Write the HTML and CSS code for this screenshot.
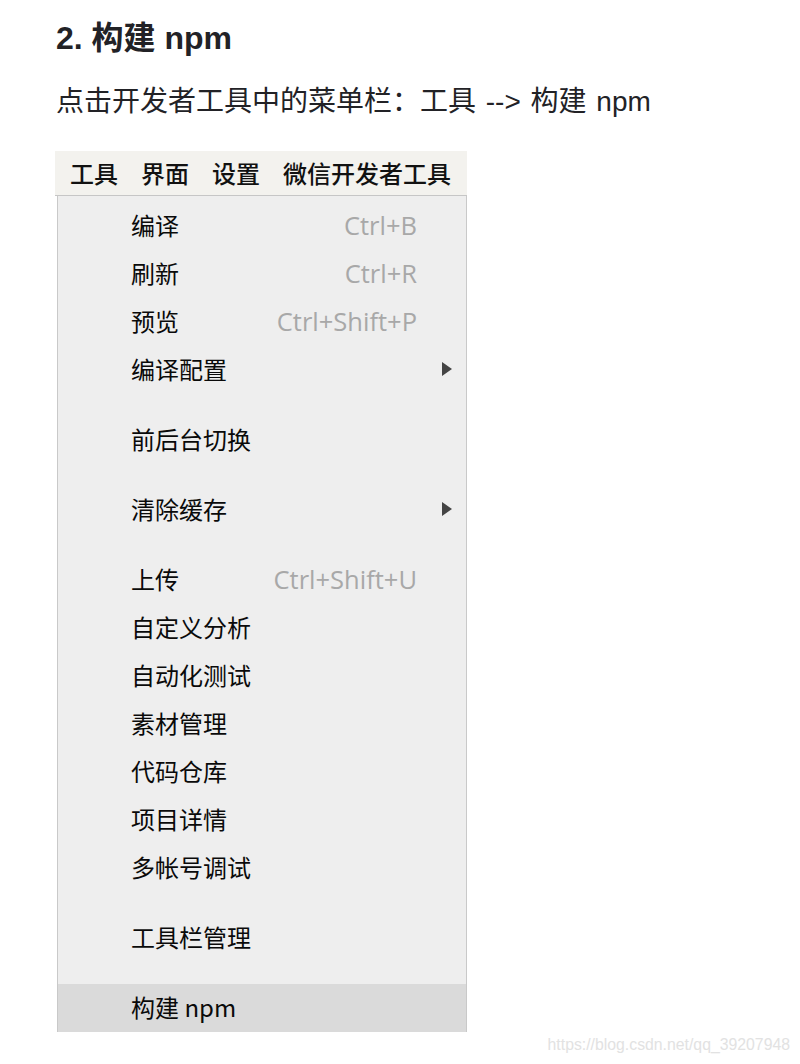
FILE: index.html
```html
<!DOCTYPE html>
<html lang="zh-CN">
<head>
<meta charset="utf-8">
<title>构建 npm</title>
<link rel="stylesheet" href="styles.css">
</head>
<body>
<h2 class="title">2. 构建 npm</h2>
<p class="lead">点击开发者工具中的菜单栏：工具 --&gt; 构建 npm</p>
<div class="shot">
  <div class="menubar">
    <span class="mb-item">工具</span>
    <span class="mb-item">界面</span>
    <span class="mb-item">设置</span>
    <span class="mb-item">微信开发者工具</span>
  </div>
  <div class="menu">
    <div class="row"><span class="label">编译</span><span class="key">Ctrl+B</span></div>
    <div class="row"><span class="label">刷新</span><span class="key">Ctrl+R</span></div>
    <div class="row"><span class="label">预览</span><span class="key">Ctrl+Shift+P</span></div>
    <div class="row"><span class="label">编译配置</span><span class="arrow"></span></div>
    <div class="sep"></div>
    <div class="row"><span class="label">前后台切换</span></div>
    <div class="sep"></div>
    <div class="row"><span class="label">清除缓存</span><span class="arrow"></span></div>
    <div class="sep"></div>
    <div class="row"><span class="label">上传</span><span class="key">Ctrl+Shift+U</span></div>
    <div class="row"><span class="label">自定义分析</span></div>
    <div class="row"><span class="label">自动化测试</span></div>
    <div class="row"><span class="label">素材管理</span></div>
    <div class="row"><span class="label">代码仓库</span></div>
    <div class="row"><span class="label">项目详情</span></div>
    <div class="row"><span class="label">多帐号调试</span></div>
    <div class="sep"></div>
    <div class="row"><span class="label">工具栏管理</span></div>
    <div class="sep"></div>
    <div class="row active"><span class="label">构建 npm</span></div>
  </div>
</div>
<div class="watermark">https://blog.csdn.net/qq_39207948</div>
</body>
</html>
```

FILE: styles.css
```css
html, body {
  margin: 0;
  background: #ffffff;
}
body {
  padding: 0 0 0 56px;
  font-family: "Liberation Sans", "Noto Sans CJK SC", sans-serif;
  color: #222226;
  height: 1064px;
  box-sizing: border-box;
  position: relative;
}
.title {
  margin: 0;
  padding-top: 18px;
  font-size: 32px;
  line-height: 40px;
  font-weight: 700;
  color: #222226;
}
.lead {
  margin: 24px 0 0;
  font-size: 28px;
  line-height: 40px;
  font-weight: 400;
  color: #222226;
  word-spacing: 2px;
}
.shot {
  margin: 29px 0 0 -1px;
  width: 414px;
  font-family: "Noto Sans CJK SC", sans-serif;
}
.menubar {
  height: 44px;
  background: #f3f2ee;
  display: flex;
  align-items: center;
  gap: 23px;
  padding-left: 15px;
  font-size: 24px;
  font-weight: 500;
  color: #111111;
  border-bottom: 1px solid #c6c6c6;
  margin: 0 2px 0 0;
}
.mb-item {
  line-height: 44px;
}
.menu {
  margin: 0 2px 0 2px;
  background: #eeeeee;
  border-left: 1px solid #c9c9c9;
  border-right: 1px solid #c9c9c9;
  padding-top: 6px;
}
.row {
  height: 48px;
  box-sizing: border-box;
  display: flex;
  align-items: center;
  padding: 0 49px 3px 73px;
  font-size: 24px;
  font-weight: 400;
  color: #0a0a0a;
}
.row .label {
  flex: 1;
}
.row .key {
  font-family: "Open Sans", sans-serif;
  font-weight: 400;
  font-size: 25.5px;
  color: #a8a8a8;
}
.row .arrow {
  width: 0;
  height: 0;
  border-top: 7.5px solid transparent;
  border-bottom: 7.5px solid transparent;
  border-left: 10px solid #444444;
  margin-right: -35px;
}
.row.active {
  background: #dadada;
}
.sep {
  height: 22px;
}
.watermark {
  position: absolute;
  right: 10px;
  top: 1034px;
  font-family: "Liberation Sans", Arial, sans-serif;
  font-size: 15.8px;
  color: #e2e2e2;
  line-height: 22px;
}
```
